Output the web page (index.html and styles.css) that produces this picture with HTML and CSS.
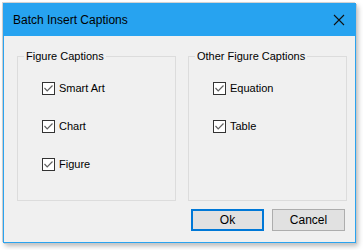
FILE: index.html
```html
<!DOCTYPE html>
<html>
<head>
<meta charset="utf-8">
<link rel="stylesheet" href="styles.css">
</head>
<body>
<div class="window">
  <div class="titlebar">
    <span class="title">Batch Insert Captions</span>
    <svg class="close" width="12" height="12" viewBox="0 0 12 12"><path d="M1 1 L11 11 M11 1 L1 11" stroke="#111" stroke-width="1.1" fill="none"/></svg>
  </div>
  <div class="content">
    <div class="groups">
      <fieldset class="group">
        <legend>Figure Captions</legend>
        <div class="rows">
          <div class="row"><span class="cb"><svg width="11" height="11" viewBox="0 0 11 11"><path d="M1.5 5 L4.2 7.8 L9.5 2.5" stroke="#606060" stroke-width="1.2" fill="none"/></svg></span><span class="label">Smart Art</span></div>
          <div class="row"><span class="cb"><svg width="11" height="11" viewBox="0 0 11 11"><path d="M1.5 5 L4.2 7.8 L9.5 2.5" stroke="#606060" stroke-width="1.2" fill="none"/></svg></span><span class="label">Chart</span></div>
          <div class="row"><span class="cb"><svg width="11" height="11" viewBox="0 0 11 11"><path d="M1.5 5 L4.2 7.8 L9.5 2.5" stroke="#606060" stroke-width="1.2" fill="none"/></svg></span><span class="label">Figure</span></div>
        </div>
      </fieldset>
      <fieldset class="group">
        <legend>Other Figure Captions</legend>
        <div class="rows">
          <div class="row"><span class="cb"><svg width="11" height="11" viewBox="0 0 11 11"><path d="M1.5 5 L4.2 7.8 L9.5 2.5" stroke="#606060" stroke-width="1.2" fill="none"/></svg></span><span class="label">Equation</span></div>
          <div class="row"><span class="cb"><svg width="11" height="11" viewBox="0 0 11 11"><path d="M1.5 5 L4.2 7.8 L9.5 2.5" stroke="#606060" stroke-width="1.2" fill="none"/></svg></span><span class="label">Table</span></div>
        </div>
      </fieldset>
    </div>
    <div class="buttons">
      <button class="btn default">Ok</button>
      <button class="btn">Cancel</button>
    </div>
  </div>
</div>
</body>
</html>
```
FILE: styles.css
```css
html, body {
  margin: 0;
  padding: 0;
  background: #ffffff;
}
body {
  width: 363px;
  height: 250px;
  overflow: hidden;
  font-family: "Liberation Sans", Arial, sans-serif;
  font-size: 11px;
  color: #000;
}
.window {
  margin: 3px 0 0 3px;
  width: 353px;
  height: 240px;
  box-sizing: border-box;
  border: 1px solid #2aa3ef;
  border-top: none;
  background: #f0f0f0;
  display: flex;
  flex-direction: column;
  box-shadow: 1px 1px 0 #c8c8c8, 2px 3px 5px rgba(0,0,0,0.28), -1px -1px 0 #d8d8d8;
}
.titlebar {
  height: 33px;
  flex: none;
  background: #27a3f0;
  margin: 0 -1px;
  display: flex;
  align-items: center;
  justify-content: space-between;
  padding: 0 11px 0 10px;
  box-sizing: border-box;
}
.title {
  font-size: 12px;
  color: #000;
  padding-top: 1px;
}
.close {
  display: block;
}
.content {
  flex: 1;
  display: flex;
  flex-direction: column;
  padding: 13px 8px 0 13px;
}
.groups {
  display: flex;
  gap: 12px;
}
.group {
  display: block;
  margin: 0;
  width: 159px;
  height: 152px;
  box-sizing: border-box;
  border: 1px solid #dcdcdc;
  padding: 16px 0 0 0;
  min-width: 0;
}
.group legend {
  padding: 0 2px;
  margin-left: 6px;
  line-height: 14px;
  white-space: nowrap;
}
.rows {
  display: flex;
  flex-direction: column;
  gap: 20px;
  padding-left: 24px;
}
.row {
  height: 18px;
  display: flex;
  align-items: center;
  gap: 4px;
}
.cb {
  width: 13px;
  height: 13px;
  flex: none;
  box-sizing: border-box;
  border: 1px solid #333333;
  background: #ffffff;
  display: flex;
  align-items: center;
  justify-content: center;
}
.cb svg {
  display: block;
}
.buttons {
  display: flex;
  justify-content: flex-end;
  gap: 8px;
  margin-top: 8px;
  padding-right: 2px;
}
.btn {
  width: 73px;
  height: 22px;
  box-sizing: border-box;
  background: #e1e1e1;
  border: 1px solid #adadad;
  font-family: "Liberation Sans", Arial, sans-serif;
  font-size: 12px;
  color: #000;
  padding: 0;
  margin: 0;
  border-radius: 0;
}
.btn.default {
  border: 2px solid #0078d7;
}
```
